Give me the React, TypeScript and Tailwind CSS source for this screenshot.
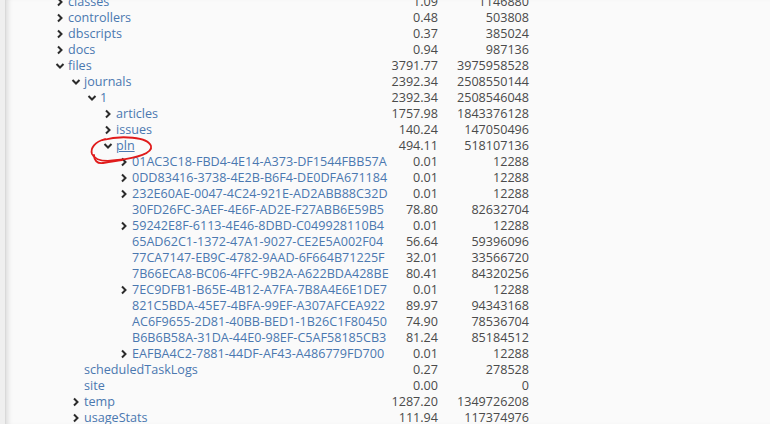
import React from "react";

type Row = {
    name: string;
    level: number;
    state: "closed" | "open" | "none";
    mb: string;
    bytes: string;
    hover?: boolean;
};

const rows: Row[] = [
    { name: "classes", level: 0, state: "closed", mb: "1.09", bytes: "1146880" },
    { name: "controllers", level: 0, state: "closed", mb: "0.48", bytes: "503808" },
    { name: "dbscripts", level: 0, state: "closed", mb: "0.37", bytes: "385024" },
    { name: "docs", level: 0, state: "closed", mb: "0.94", bytes: "987136" },
    { name: "files", level: 0, state: "open", mb: "3791.77", bytes: "3975958528" },
    { name: "journals", level: 1, state: "open", mb: "2392.34", bytes: "2508550144" },
    { name: "1", level: 2, state: "open", mb: "2392.34", bytes: "2508546048" },
    { name: "articles", level: 3, state: "closed", mb: "1757.98", bytes: "1843376128" },
    { name: "issues", level: 3, state: "closed", mb: "140.24", bytes: "147050496" },
    { name: "pln", level: 3, state: "open", mb: "494.11", bytes: "518107136", hover: true },
    { name: "01AC3C18-FBD4-4E14-A373-DF1544FBB57A", level: 4, state: "closed", mb: "0.01", bytes: "12288" },
    { name: "0DD83416-3738-4E2B-B6F4-DE0DFA671184", level: 4, state: "closed", mb: "0.01", bytes: "12288" },
    { name: "232E60AE-0047-4C24-921E-AD2ABB88C32D", level: 4, state: "closed", mb: "0.01", bytes: "12288" },
    { name: "30FD26FC-3AEF-4E6F-AD2E-F27ABB6E59B5", level: 4, state: "none", mb: "78.80", bytes: "82632704" },
    { name: "59242E8F-6113-4E46-8DBD-C049928110B4", level: 4, state: "closed", mb: "0.01", bytes: "12288" },
    { name: "65AD62C1-1372-47A1-9027-CE2E5A002F04", level: 4, state: "none", mb: "56.64", bytes: "59396096" },
    { name: "77CA7147-EB9C-4782-9AAD-6F664B71225F", level: 4, state: "none", mb: "32.01", bytes: "33566720" },
    { name: "7B66ECA8-BC06-4FFC-9B2A-A622BDA428BE", level: 4, state: "none", mb: "80.41", bytes: "84320256" },
    { name: "7EC9DFB1-B65E-4B12-A7FA-7B8A4E6E1DE7", level: 4, state: "closed", mb: "0.01", bytes: "12288" },
    { name: "821C5BDA-45E7-4BFA-99EF-A307AFCEA922", level: 4, state: "none", mb: "89.97", bytes: "94343168" },
    { name: "AC6F9655-2D81-40BB-BED1-1B26C1F80450", level: 4, state: "none", mb: "74.90", bytes: "78536704" },
    { name: "B6B6B58A-31DA-44E0-98EF-C5AF58185CB3", level: 4, state: "none", mb: "81.24", bytes: "85184512" },
    { name: "EAFBA4C2-7881-44DF-AF43-A486779FD700", level: 4, state: "closed", mb: "0.01", bytes: "12288" },
    { name: "scheduledTaskLogs", level: 1, state: "none", mb: "0.27", bytes: "278528" },
    { name: "site", level: 1, state: "none", mb: "0.00", bytes: "0" },
    { name: "temp", level: 1, state: "closed", mb: "1287.20", bytes: "1349726208" },
    { name: "usageStats", level: 1, state: "closed", mb: "111.94", bytes: "117374976" },
];

const indents = ["pl-0", "pl-4", "pl-8", "pl-12", "pl-16"];

function Chevron({ open }: { open: boolean }) {
    return (
        <svg width="12" height="12" viewBox="0 0 12 12" className="shrink-0">
            {open ? (
                <polyline points="2.5,4 6,7.5 9.5,4" fill="none" stroke="#2b2b2b" strokeWidth="2" />
            ) : (
                <polyline points="4,2.5 7.5,6 4,9.5" fill="none" stroke="#2b2b2b" strokeWidth="2" />
            )}
        </svg>
    );
}

export default function App() {
    return (
        <div className="flex h-[424px] w-[770px] overflow-hidden bg-[#fafafa] font-['Open_Sans',sans-serif] text-[12.6px]">
            {/* side gutter */}
            <div className="w-[6px] shrink-0 bg-[#efefef] border-r border-[#d9d9d9]" />
            <div className="relative flex-1 shadow-[inset_5px_0_5px_-3px_rgba(0,0,0,0.12)]">
                <div className="-mt-[6px] pl-[48px]">
                    {rows.map((r) => (
                        <div key={r.name} className="flex h-4 items-center leading-4">
                            <div className={`flex w-[331px] shrink-0 items-center whitespace-nowrap ${indents[r.level]}`}>
                                <span className="flex w-[14px] shrink-0 items-center">
                                    {r.state !== "none" && <Chevron open={r.state === "open"} />}
                                </span>
                                <span className={`text-[#4a78b0] ${r.hover ? "underline" : ""}`}>{r.name}</span>
                            </div>
                            <div className="w-[53px] shrink-0 text-right text-[#4a4a4a]">{r.mb}</div>
                            <div className="w-[91px] shrink-0 text-right text-[#4a4a4a]">{r.bytes}</div>
                        </div>
                    ))}
                </div>

                {/* hand-drawn annotation around pln */}
                <svg
                    className="pointer-events-none absolute left-[-7px] top-0"
                    width="200"
                    height="200"
                    viewBox="0 0 200 200"
                >
                    <path
                        d="M104 140 C122 135 149 137 152 146 C154 153 138 158 119 160 C105 162 96 161 93 154 C91 148 96 142 106 139"
                        fill="none"
                        stroke="#e01b1b"
                        strokeWidth="1.8"
                        strokeLinecap="round"
                    />
                    <path
                        d="M95 155 C95 160 98 164 104 163 C110 162 116 161 123 160"
                        fill="none"
                        stroke="#e01b1b"
                        strokeWidth="1.8"
                        strokeLinecap="round"
                    />
                </svg>
            </div>
        </div>
    );
}
